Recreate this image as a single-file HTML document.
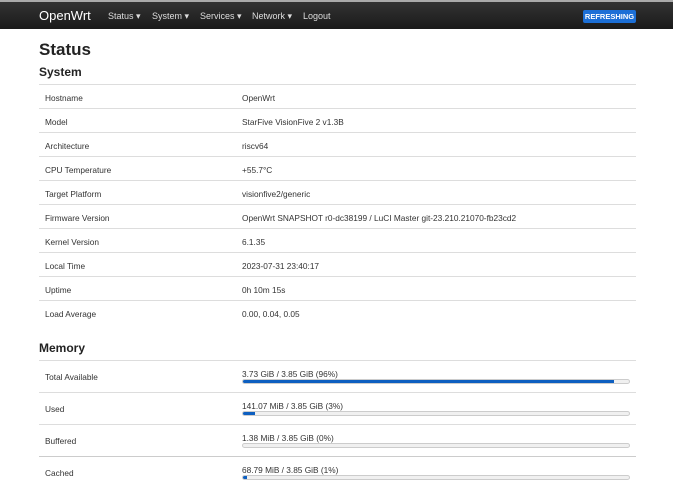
<!DOCTYPE html><html><head><style>
*{margin:0;padding:0;box-sizing:border-box}
body{width:673px;height:500px;overflow:hidden;background:#fff;font-family:"Liberation Sans",sans-serif;color:#333;position:relative}
.nav{position:absolute;left:0;top:0;width:673px;height:29px;background:linear-gradient(#333,#1a1a1a);border-top:2px solid #aaa}
.nav span{position:absolute;color:#ddd;font-size:9px;top:9px}
.brand{font-size:13px!important;color:#fff!important;top:6px!important}
.badge{position:absolute;left:583px;top:8px;width:53px;height:13px;background:#1c6fd6;border-radius:2px;color:#fff;font-size:7.5px;font-weight:bold;text-align:center;line-height:13px}
h1{position:absolute;left:39px;top:40px;font-size:17px;font-weight:bold;color:#222}
h2{position:absolute;left:39px;font-size:12px;font-weight:bold;color:#222}
.row{position:absolute;left:39px;width:597px;border-top:1px solid #ddd;font-size:8.3px}
.row .l{position:absolute;left:6px}
.row .v{position:absolute;left:203px}
.bar{position:absolute;left:203px;width:388px;height:5px;border:1px solid #ccc;border-radius:3px;background:#f0f0f0;overflow:hidden}
.bar i{display:block;height:100%;background:#0d5fc0}
</style></head><body>
<div class="nav">
<span class="brand" style="left:39px">OpenWrt</span>
<span style="left:108px">Status ▾</span>
<span style="left:152px">System ▾</span>
<span style="left:200px">Services ▾</span>
<span style="left:252px">Network ▾</span>
<span style="left:303px">Logout</span>
<div class="badge">REFRESHING</div>
</div>
<h1>Status</h1>
<h2 style="top:65px">System</h2>
<div class="row" style="top:84px;height:24px"><span class="l" style="top:8px">Hostname</span><span class="v" style="top:8px">OpenWrt</span></div>
<div class="row" style="top:108px;height:24px"><span class="l" style="top:8px">Model</span><span class="v" style="top:8px">StarFive VisionFive 2 v1.3B</span></div>
<div class="row" style="top:132px;height:24px"><span class="l" style="top:8px">Architecture</span><span class="v" style="top:8px">riscv64</span></div>
<div class="row" style="top:156px;height:24px"><span class="l" style="top:8px">CPU Temperature</span><span class="v" style="top:8px">+55.7°C</span></div>
<div class="row" style="top:180px;height:24px"><span class="l" style="top:8px">Target Platform</span><span class="v" style="top:8px">visionfive2/generic</span></div>
<div class="row" style="top:204px;height:24px"><span class="l" style="top:8px">Firmware Version</span><span class="v" style="top:8px">OpenWrt SNAPSHOT r0-dc38199 / LuCI Master git-23.210.21070-fb23cd2</span></div>
<div class="row" style="top:228px;height:24px"><span class="l" style="top:8px">Kernel Version</span><span class="v" style="top:8px">6.1.35</span></div>
<div class="row" style="top:252px;height:24px"><span class="l" style="top:8px">Local Time</span><span class="v" style="top:8px">2023-07-31 23:40:17</span></div>
<div class="row" style="top:276px;height:24px"><span class="l" style="top:8px">Uptime</span><span class="v" style="top:8px">0h 10m 15s</span></div>
<div class="row" style="top:300px;height:24px"><span class="l" style="top:8px">Load Average</span><span class="v" style="top:8px">0.00, 0.04, 0.05</span></div>
<h2 style="top:341px">Memory</h2>
<div class="row" style="top:360px;height:32px"><span class="l" style="top:11px">Total Available</span><span class="v" style="top:8px">3.73 GiB / 3.85 GiB (96%)</span><div class="bar" style="top:18px"><i style="width:96%"></i></div></div>
<div class="row" style="top:392px;height:32px"><span class="l" style="top:11px">Used</span><span class="v" style="top:8px">141.07 MiB / 3.85 GiB (3%)</span><div class="bar" style="top:18px"><i style="width:3%"></i></div></div>
<div class="row" style="top:424px;height:32px"><span class="l" style="top:11px">Buffered</span><span class="v" style="top:8px">1.38 MiB / 3.85 GiB (0%)</span><div class="bar" style="top:18px"><i style="width:0%"></i></div></div>
<div class="row" style="top:456px;height:32px;border-top-color:#ccc"><span class="l" style="top:11px">Cached</span><span class="v" style="top:8px">68.79 MiB / 3.85 GiB (1%)</span><div class="bar" style="top:18px"><i style="width:1%"></i></div></div>
</body></html>
